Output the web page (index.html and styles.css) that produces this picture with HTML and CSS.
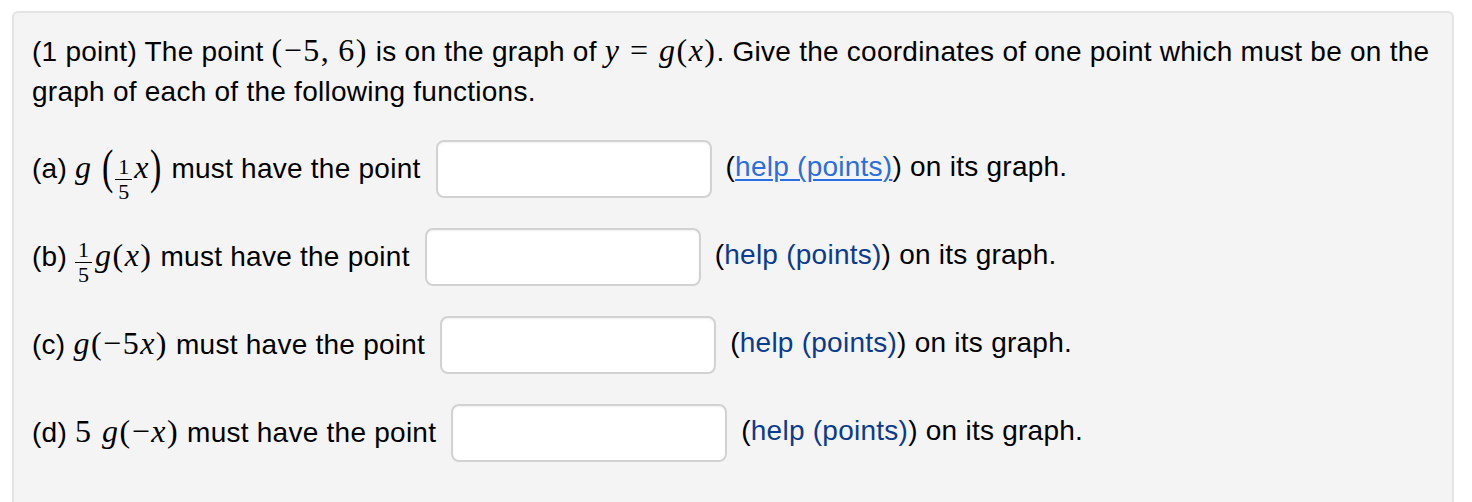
FILE: index.html
```html
<!DOCTYPE html>
<html>
<head>
<meta charset="utf-8">
<link rel="stylesheet" href="styles.css">
</head>
<body>
<div class="problem">
  <p class="intro">(1 point) The point <span class="m">(−5,&thinsp;6)</span> is on the graph of <span class="m"><i>y</i> = <i>g</i>(<i>x</i>)</span>. Give the coordinates of one point which must be on the<br>graph of each of the following functions.</p>

  <div class="row">
    <span class="lbl">(a) <span class="m"><i>g</i> <span class="big">(</span><span class="frac low"><span class="num">1</span><span class="den">5</span></span><i>x</i><span class="big">)</span></span> must have the point</span>
    <input class="ans" type="text">
    <span class="after">(<a class="help active" href="#">help (points)</a>) on its graph.</span>
  </div>

  <div class="row">
    <span class="lbl">(b) <span class="m"><span class="frac"><span class="num">1</span><span class="den">5</span></span><i>g</i>(<i>x</i>)</span> must have the point</span>
    <input class="ans" type="text">
    <span class="after">(<a class="help" href="#">help (points)</a>) on its graph.</span>
  </div>

  <div class="row">
    <span class="lbl">(c) <span class="m"><i>g</i>(−5<i>x</i>)</span> must have the point</span>
    <input class="ans" type="text">
    <span class="after">(<a class="help" href="#">help (points)</a>) on its graph.</span>
  </div>

  <div class="row">
    <span class="lbl">(d) <span class="m">5 <i>g</i>(−<i>x</i>)</span> must have the point</span>
    <input class="ans" type="text">
    <span class="after">(<a class="help" href="#">help (points)</a>) on its graph.</span>
  </div>
</div>
</body>
</html>
```

FILE: styles.css
```css
html, body {
  margin: 0;
  padding: 0;
  background: #ffffff;
}

body {
  padding: 11px 18px 0 12px;
  font-family: "Liberation Sans", Arial, Helvetica, sans-serif;
  font-size: 28px;
  line-height: 40px;
  letter-spacing: 0.25px;
  color: #000;
}

.problem {
  background: #f4f4f4;
  border: 2px solid #e4e4e4;
  border-bottom: none;
  border-radius: 6px 6px 0 0;
  padding: 17px 20px 60px 18px;
  min-height: 420px;
}

.intro {
  margin: 0 0 28px 0;
}

.row {
  display: flex;
  align-items: center;
  height: 58px;
  margin: 0 0 30px 0;
  white-space: nowrap;
}

.lbl,
.after {
  display: block;
  height: 40px;
  line-height: 40px;
  margin-bottom: 4px;
}

.m {
  font-family: "Liberation Serif", "Times New Roman", serif;
  font-size: 32px;
  letter-spacing: 1.5px;
}

.m i {
  font-style: italic;
}

.big {
  display: inline-block;
  font-size: 34px;
  letter-spacing: 0;
  transform: scaleY(1.45);
  vertical-align: 0px;
  margin: 0 2px 0 0;
}

.frac {
  display: inline-flex;
  flex-direction: column;
  align-items: center;
  font-size: 22px;
  line-height: 1;
  letter-spacing: 0;
  vertical-align: 9px;
  margin: 0 3px 0 0;
}

.frac.low {
  vertical-align: 4px;
  margin: 0 2px 0 0;
}

.frac .num {
  display: block;
  border-bottom: 1.5px solid #000;
  padding: 0 3px 1px;
}

.frac .den {
  display: block;
  padding-top: 1px;
}

.ans {
  box-sizing: border-box;
  flex: none;
  width: 276px;
  height: 58px;
  margin: 0 14px 0 15px;
  border: 2px solid #d2d2d2;
  border-radius: 8px;
  background: #fff;
  box-shadow: inset 0 1px 2px rgba(0, 0, 0, 0.06);
  font-size: 28px;
  padding: 4px 10px;
}

.help {
  color: #0b3b8f;
  text-decoration: none;
}

.help.active {
  color: #2b6ee2;
  text-decoration: underline;
  text-decoration-thickness: 2px;
  text-underline-offset: 3px;
}
```
